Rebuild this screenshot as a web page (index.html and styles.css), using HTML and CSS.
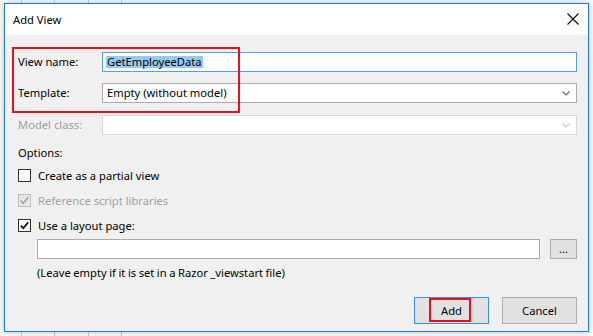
FILE: index.html
```html
<!DOCTYPE html>
<html>
<head>
<meta charset="utf-8">
<title>Add View</title>
<link rel="stylesheet" href="styles.css">
</head>
<body>
<div class="window">
  <div class="titlebar">
    <span class="title">Add View</span>
    <svg class="close" width="12" height="12" viewBox="0 0 12 12"><path d="M0.5 0.5 L11.5 11.5 M11.5 0.5 L0.5 11.5" stroke="#000" stroke-width="1.1" fill="none"/></svg>
  </div>
  <div class="content">
    <div class="fields">
      <label class="lbl">View name:</label>
      <div class="input focused"><span class="sel">GetEmployeeData</span></div>
      <label class="lbl">Template:</label>
      <div class="input combo"><span>Empty (without model)</span>
        <svg class="chev" width="8" height="5" viewBox="0 0 8 5"><path d="M0.5 0.5 L4 4 L7.5 0.5" stroke="#6d6d6d" stroke-width="1.2" fill="none"/></svg>
      </div>
      <label class="lbl disabled model">Model class:</label>
      <div class="input combo disabled-box model">
        <svg class="chev" width="8" height="5" viewBox="0 0 8 5"><path d="M0.5 0.5 L4 4 L7.5 0.5" stroke="#c4c4c4" stroke-width="1.2" fill="none"/></svg>
      </div>
    </div>
    <div class="options">Options:</div>
    <div class="check-row first">
      <span class="box"></span><span>Create as a partial view</span>
    </div>
    <div class="check-row">
      <span class="box dis"><svg width="11" height="11" viewBox="0 0 11 11"><path d="M1.8 5.6 L4.2 8.2 L9.2 2.4" stroke="#a8a8a8" stroke-width="1.7" fill="none"/></svg></span><span class="disabled">Reference script libraries</span>
    </div>
    <div class="check-row">
      <span class="box"><svg width="11" height="11" viewBox="0 0 11 11"><path d="M1.8 5.6 L4.2 8.2 L9.2 2.4" stroke="#111" stroke-width="1.7" fill="none"/></svg></span><span>Use a layout page:</span>
    </div>
    <div class="layout-row">
      <div class="input wide"></div>
      <div class="browse">...</div>
    </div>
    <div class="hint">(Leave empty if it is set in a Razor _viewstart file)</div>
    <div class="buttons">
      <div class="btn default">Add<span class="mark"></span></div>
      <div class="btn">Cancel</div>
    </div>
  </div>
  <div class="annot"></div>
</div>
</body>
</html>
```
FILE: styles.css
```css
html, body {
  margin: 0;
  padding: 0;
}
body {
  width: 593px;
  height: 336px;
  overflow: hidden;
  background-color: #fff;
  background-image:
    linear-gradient(#cfcfcf, #cfcfcf),
    linear-gradient(#cfcfcf, #cfcfcf),
    linear-gradient(#cfcfcf, #cfcfcf),
    linear-gradient(#cfcfcf, #cfcfcf);
  background-size: 1px 100%;
  background-repeat: no-repeat;
  background-position: 21px 0, 54px 0, 88px 0, 121px 0;
  font-family: "Noto Sans", "Open Sans", sans-serif;
  font-size: 11.2px;
  color: #000;
}
.window {
  position: relative;
  box-sizing: border-box;
  width: 585px;
  height: 329px;
  margin: 3px 0 0 4px;
  border: 1px solid #1979ca;
  box-shadow: 0 0 7px rgba(0, 0, 0, 0.28);
  display: flex;
  flex-direction: column;
}
.titlebar {
  height: 31px;
  background: #fff;
  display: flex;
  align-items: center;
  justify-content: space-between;
  padding: 0 9px 0 8px;
}
.title {
  line-height: 14px;
}
.close {
  display: block;
  margin-top: -1px;
}
.content {
  flex: 1;
  background: #f0f0f0;
  padding: 17px 11px 0 13px;
}
.fields {
  display: grid;
  grid-template-columns: 84px 1fr;
  grid-auto-rows: 20px;
  row-gap: 11px;
  align-items: center;
}
.model {
  margin-top: 1px;
}
.lbl {
  line-height: 14px;
}
.disabled {
  color: #a0a0a0;
}
.input {
  box-sizing: border-box;
  height: 20px;
  background: #fff;
  border: 1px solid #acacac;
  padding: 0 4px;
  display: flex;
  align-items: center;
  line-height: 14px;
  position: relative;
}
.input.focused {
  border-color: #569de5;
}
.sel {
  background: #99c9ef;
  padding: 0 1px;
  margin-left: -1px;
  line-height: 12px;
}
.combo .chev {
  position: absolute;
  right: 6px;
  top: 7px;
}
.disabled-box {
  border-color: #d9d9d9;
}
.options {
  margin-top: 12px;
  line-height: 14px;
}
.check-row {
  display: flex;
  align-items: center;
  gap: 7px;
  height: 13px;
  margin-top: 12px;
  line-height: 14px;
}
.check-row.first {
  margin-top: 9px;
}
.box {
  box-sizing: border-box;
  width: 13px;
  height: 13px;
  border: 1px solid #333;
  background: #fff;
  display: flex;
  align-items: center;
  justify-content: center;
}
.box svg {
  display: block;
}
.box.dis {
  border-color: #bcbcbc;
  background: #e6e6e6;
}
.layout-row {
  display: flex;
  margin-top: 7px;
  padding-left: 19px;
  gap: 10px;
}
.input.wide {
  width: 503px;
}
.browse {
  box-sizing: border-box;
  width: 27px;
  height: 20px;
  background: #e1e1e1;
  border: 1px solid #adadad;
  display: flex;
  align-items: center;
  justify-content: center;
  line-height: 10px;
  font-size: 11px;
}
.hint {
  margin-top: 7px;
  padding-left: 19px;
  line-height: 14px;
  word-spacing: -0.4px;
}
.buttons {
  display: flex;
  justify-content: flex-end;
  gap: 13px;
  margin-top: 17px;
}
.btn {
  position: relative;
  box-sizing: border-box;
  width: 75px;
  height: 27px;
  background: #e1e1e1;
  border: 1px solid #adadad;
  display: flex;
  align-items: center;
  justify-content: center;
  line-height: 14px;
}
.btn.default {
  border-color: #3c8fe3;
}
.mark {
  position: absolute;
  left: 14px;
  top: 0;
  width: 42px;
  height: 24px;
  box-sizing: border-box;
  border: 2px solid #e8101c;
}
.annot {
  position: absolute;
  left: 7px;
  top: 43px;
  width: 228px;
  height: 66px;
  box-sizing: border-box;
  border: 2px solid #e8101c;
}
```
